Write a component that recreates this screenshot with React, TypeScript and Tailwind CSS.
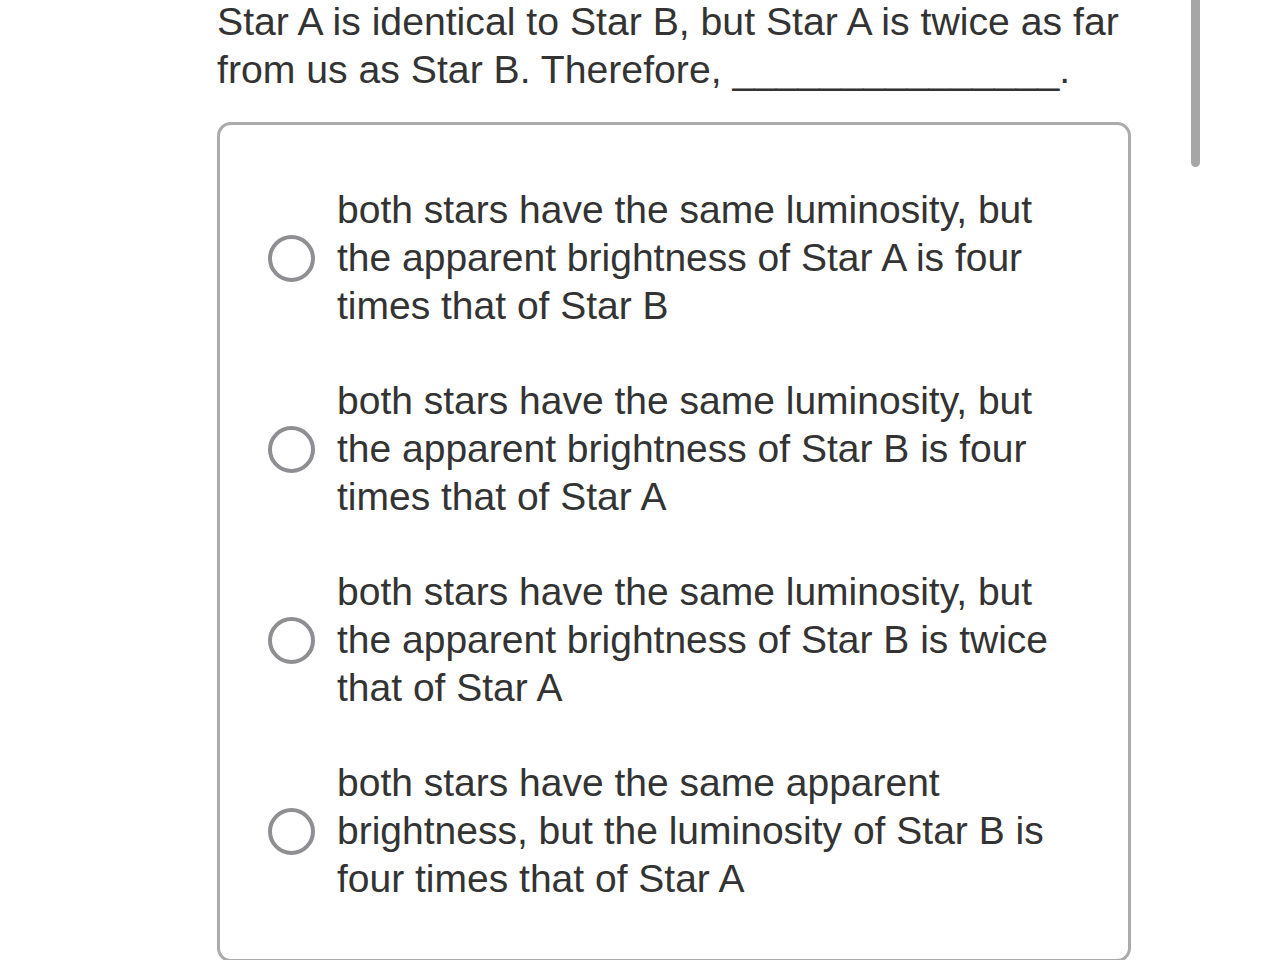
const OPTIONS = [
  "both stars have the same luminosity, but the apparent brightness of Star A is four times that of Star B",
  "both stars have the same luminosity, but the apparent brightness of Star B is four times that of Star A",
  "both stars have the same luminosity, but the apparent brightness of Star B is twice that of Star A",
  "both stars have the same apparent brightness, but the luminosity of Star B is four times that of Star A",
];

function Option({ text }: { text: string }) {
  return (
    <label className="flex items-center cursor-pointer">
      <span className="ml-[48px] w-[47px] h-[47px] shrink-0 rounded-full border-[4px] border-[#8e8e93] bg-white" />
      <span className="ml-[22px] w-[740px] text-[39px] leading-[48px] text-[#333333]">{text}</span>
    </label>
  );
}

export default function App() {
  return (
    <div className="relative h-[960px] overflow-hidden bg-white font-['Liberation_Sans',Arial,sans-serif]">
      <div className="pl-[217px] w-[1131px]">
        <p className="-mt-[2px] text-[39.2px] leading-[48px] text-[#333333]">
          Star A is identical to Star B, but Star A is twice as far from us as Star B. Therefore, _______________.
        </p>

        <div className="mt-[28px] rounded-[14px] border-[3px] border-[#ababab] pt-[61px] pb-[56px] flex flex-col gap-[47px]">
          {OPTIONS.map((o) => (
            <Option key={o} text={o} />
          ))}
        </div>
      </div>

      <div className="absolute left-[1191px] top-0 w-[9px] h-[167px] rounded-b-full bg-[#a6a6a6]" />
    </div>
  );
}
